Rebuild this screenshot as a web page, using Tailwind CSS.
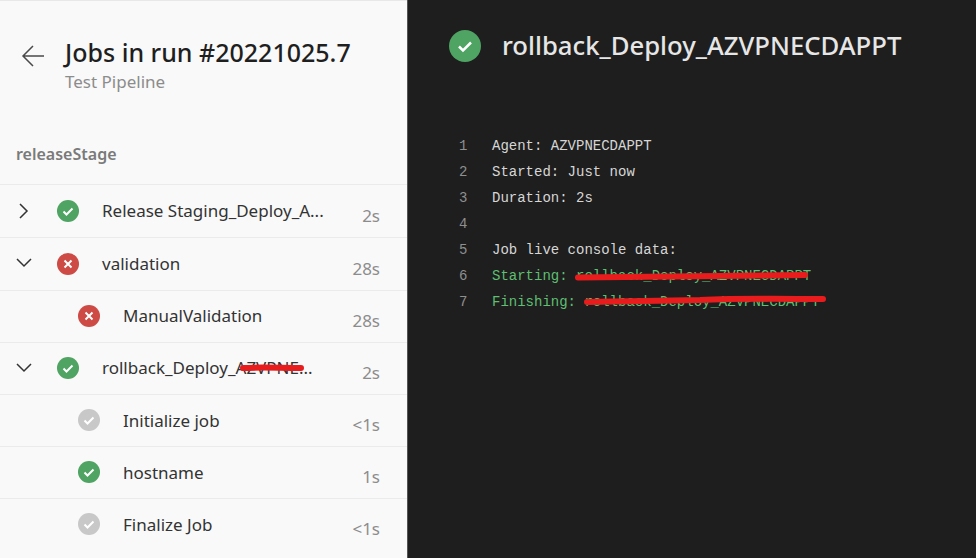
<!DOCTYPE html>
<html lang="en">
  <head>
    <meta charset="UTF-8" />
    <title>Jobs in run</title>
    <script src="https://cdn.jsdelivr.net/npm/@tailwindcss/browser@4"></script>
  </head>
  <body class="w-[976px] h-[558px] overflow-hidden bg-[#1e1e1e] font-['Noto_Sans','Open_Sans',sans-serif]">
    <div class="flex h-[558px]">
      <!-- job list -->
      <div class="w-[407px] h-full bg-[#f9f9f9] shrink-0 flex flex-col border-t border-[#e8e8e8]">
        <div class="h-[130px] flex items-start pt-[35px] pl-[21px]">
          <svg class="w-[24px] h-[24px] mt-[8px]" viewBox="0 0 24 24" fill="none" stroke="#4a4a4a" stroke-width="1.5"><path d="M23 12H2M12 2 2 12l10 10"/></svg>
          <div class="ml-[20px]">
            <div class="text-[25px] leading-[32px] font-medium text-[#1f1f1f] whitespace-nowrap">Jobs in run #20221025.7</div>
            <div class="text-[17px] leading-[24px] text-[#8c8c8c] mt-[2px]">Test Pipeline</div>
          </div>
        </div>
        <div class="h-[53px] pl-[16px] pt-[11px] text-[16px] leading-[24px] font-semibold text-[#7a7a7a]">releaseStage</div>

        <div class="border-t border-[#ebebeb] h-[53px] flex items-center">
          <svg class="w-[12px] h-[16px] ml-[18px] mb-[1px]" viewBox="0 0 12 16" fill="none" stroke="#333" stroke-width="1.5"><path d="M2 1l7 7-7 7"/></svg>
          <svg class="w-[22px] h-[22px] ml-[27px] mb-[1px]" viewBox="0 0 22 22"><circle cx="11" cy="11" r="11" fill="#4fa363"/><path d="M6.5 11.5l3 3 6-6" fill="none" stroke="#fff" stroke-width="2"/></svg>
          <div class="ml-[23px] w-[238px] text-[17px] text-[#333] whitespace-nowrap">Release Staging_Deploy_A...</div>
          <div class="w-[40px] text-right text-[17px] text-[#8c8c8c] mt-[9px]">2s</div>
        </div>

        <div class="border-t border-[#ebebeb] h-[53px] flex items-center">
          <svg class="w-[16px] h-[12px] ml-[16px] mb-[2px]" viewBox="0 0 16 12" fill="none" stroke="#333" stroke-width="1.5"><path d="M1 2l7 7 7-7"/></svg>
          <svg class="w-[22px] h-[22px] ml-[25px] mb-[1px]" viewBox="0 0 22 22"><circle cx="11" cy="11" r="11" fill="#cd4a45"/><path d="M7.5 7.5l7 7m0-7l-7 7" fill="none" stroke="#fff" stroke-width="2"/></svg>
          <div class="ml-[23px] w-[238px] text-[17px] text-[#333] whitespace-nowrap mb-[1px]">validation</div>
          <div class="w-[40px] text-right text-[17px] text-[#8c8c8c] mt-[9px]">28s</div>
        </div>

        <div class="border-t border-[#ebebeb] h-[52px] flex items-center">
          <svg class="w-[22px] h-[22px] ml-[78px] mb-[1px]" viewBox="0 0 22 22"><circle cx="11" cy="11" r="11" fill="#cd4a45"/><path d="M7.5 7.5l7 7m0-7l-7 7" fill="none" stroke="#fff" stroke-width="2"/></svg>
          <div class="ml-[23px] w-[217px] text-[17px] text-[#333] whitespace-nowrap mb-[1px]">ManualValidation</div>
          <div class="w-[40px] text-right text-[17px] text-[#8c8c8c] mt-[9px]">28s</div>
        </div>

        <div class="border-t border-[#ebebeb] h-[52px] flex items-center relative">
          <svg class="w-[16px] h-[12px] ml-[16px] mb-[2px]" viewBox="0 0 16 12" fill="none" stroke="#333" stroke-width="1.5"><path d="M1 2l7 7 7-7"/></svg>
          <svg class="w-[22px] h-[22px] ml-[25px] mb-[1px]" viewBox="0 0 22 22"><circle cx="11" cy="11" r="11" fill="#4fa363"/><path d="M6.5 11.5l3 3 6-6" fill="none" stroke="#fff" stroke-width="2"/></svg>
          <div class="ml-[23px] w-[238px] text-[17px] text-[#333] whitespace-nowrap mb-[1px]">rollback_Deploy_AZVPNE...</div>
          <div class="w-[40px] text-right text-[17px] text-[#8c8c8c] mt-[9px]">2s</div>
          <!-- red scribble -->
          <svg class="absolute left-[240px] top-[20px] w-[64px] h-[10px]" viewBox="0 0 64 10" fill="none" stroke="#e81c1c" stroke-width="6" stroke-linecap="round"><path d="M3 5C20 4 40 5 61 5"/></svg>
        </div>

        <div class="border-t border-[#ebebeb] h-[52px] flex items-center">
          <svg class="w-[22px] h-[22px] ml-[78px] mb-[1px]" viewBox="0 0 22 22"><circle cx="11" cy="11" r="11" fill="#c8c8c8"/><path d="M6.5 11.5l3 3 6-6" fill="none" stroke="#fff" stroke-width="2"/></svg>
          <div class="ml-[23px] w-[217px] text-[17px] text-[#333] whitespace-nowrap">Initialize job</div>
          <div class="w-[40px] text-right text-[17px] text-[#8c8c8c] mt-[9px]">&lt;1s</div>
        </div>

        <div class="border-t border-[#ebebeb] h-[52px] flex items-center">
          <svg class="w-[22px] h-[22px] ml-[78px] mb-[1px]" viewBox="0 0 22 22"><circle cx="11" cy="11" r="11" fill="#4fa363"/><path d="M6.5 11.5l3 3 6-6" fill="none" stroke="#fff" stroke-width="2"/></svg>
          <div class="ml-[23px] w-[217px] text-[17px] text-[#333] whitespace-nowrap">hostname</div>
          <div class="w-[40px] text-right text-[17px] text-[#8c8c8c] mt-[9px]">1s</div>
        </div>

        <div class="border-t border-[#ebebeb] h-[52px] flex items-center">
          <svg class="w-[22px] h-[22px] ml-[78px] mb-[1px]" viewBox="0 0 22 22"><circle cx="11" cy="11" r="11" fill="#c8c8c8"/><path d="M6.5 11.5l3 3 6-6" fill="none" stroke="#fff" stroke-width="2"/></svg>
          <div class="ml-[23px] w-[217px] text-[17px] text-[#333] whitespace-nowrap">Finalize Job</div>
          <div class="w-[40px] text-right text-[17px] text-[#8c8c8c] mt-[9px]">&lt;1s</div>
        </div>
      </div>

      <!-- log output -->
      <div class="flex-1 border-l border-[#555] relative">
        <div class="flex items-center h-[32px] mt-[30px] pl-[41px]">
          <svg class="w-[32px] h-[32px]" viewBox="0 0 32 32"><circle cx="16" cy="16" r="16" fill="#4fa363"/><path d="M10 16.5l4 4 8-8" fill="none" stroke="#fff" stroke-width="2.5"/></svg>
          <div class="ml-[21px] text-[25.7px] font-medium text-[#e6e6e6] whitespace-nowrap">rollback_Deploy_AZVPNECDAPPT</div>
        </div>
        <div class="mt-[71px] font-['Liberation_Mono',monospace] text-[14px] leading-[26px]">
          <div class="flex h-[26px]"><span class="w-[84px] pl-[51px] text-[#8f8f8f]">1</span><span class="text-[#d6d6d6]">Agent: AZVPNECDAPPT</span></div>
          <div class="flex h-[26px]"><span class="w-[84px] pl-[51px] text-[#8f8f8f]">2</span><span class="text-[#d6d6d6]">Started: Just now</span></div>
          <div class="flex h-[26px]"><span class="w-[84px] pl-[51px] text-[#8f8f8f]">3</span><span class="text-[#d6d6d6]">Duration: 2s</span></div>
          <div class="flex h-[26px]"><span class="w-[84px] pl-[51px] text-[#8f8f8f]">4</span></div>
          <div class="flex h-[26px]"><span class="w-[84px] pl-[51px] text-[#8f8f8f]">5</span><span class="text-[#d6d6d6]">Job live console data:</span></div>
          <div class="flex h-[26px]"><span class="w-[84px] pl-[51px] text-[#8f8f8f]">6</span><span class="text-[#5fbf72]">Starting: rollback_Deploy_AZVPNECDAPPT</span></div>
          <div class="flex h-[26px]"><span class="w-[84px] pl-[51px] text-[#8f8f8f]">7</span><span class="text-[#5fbf72]">Finishing: rollback_Deploy_AZVPNECDAPPT</span></div>
        </div>
        <!-- red scribbles -->
        <svg class="absolute left-0 top-0 w-[568px] h-[558px] pointer-events-none" viewBox="408 0 568 558" fill="none" stroke="#e81c1c" stroke-width="6" stroke-linecap="round"><path d="M578 277.5C640 277 720 276 805 275"/><path d="M587 302C650 301 680 300.5 700 300C745 298 790 299 823 299"/></svg>
      </div>
    </div>
  </body>
</html>
